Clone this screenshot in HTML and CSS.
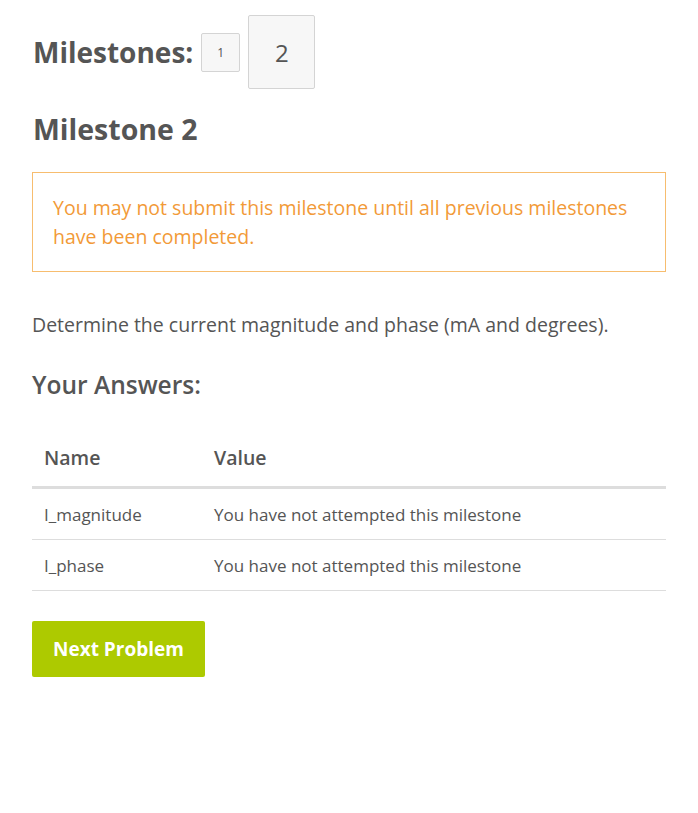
FILE: index.html
```html
<!DOCTYPE html>
<html lang="en">
<head>
  <meta charset="UTF-8" />
  <meta name="viewport" content="width=device-width, initial-scale=1.0"/>
  <title>Milestone 2</title>
  <link rel="stylesheet" href="styles.css">
</head>
<body>
  <div class="content">
    <div class="milestones">
      <h1>Milestones:</h1>
      <button class="step">1</button>
      <button class="step current">2</button>
    </div>

    <h2 class="title">Milestone 2</h2>

    <div class="alert">
      You may not submit this milestone until all previous milestones have been completed.
    </div>

    <p class="question">Determine the current magnitude and phase (mA and degrees).</p>

    <h3 class="answers-title">Your Answers:</h3>

    <table class="answers">
      <thead>
        <tr>
          <th class="name-col">Name</th>
          <th>Value</th>
        </tr>
      </thead>
      <tbody>
        <tr>
          <td>I_magnitude</td>
          <td>You have not attempted this milestone</td>
        </tr>
        <tr>
          <td>I_phase</td>
          <td>You have not attempted this milestone</td>
        </tr>
      </tbody>
    </table>

    <button class="next">Next Problem</button>
  </div>
</body>
</html>
```

FILE: styles.css
```css
body {
  margin: 0;
  font-family: "Open Sans", sans-serif;
  color: #555;
  background-color: #fff;
}

.content {
  padding: 15px 32px 0 32px;
}

.milestones {
  display: flex;
  align-items: center;
  gap: 8px;
}

.milestones h1 {
  margin: 0 0 0 1px;
  font-size: 28px;
  font-weight: 700;
  color: #555;
}

button {
  font-family: "Open Sans", sans-serif;
  cursor: pointer;
}

.step {
  width: 39px;
  height: 39px;
  padding: 0;
  background-color: #f7f7f7;
  border: 1px solid #d4d4d4;
  border-radius: 2px;
  color: #555;
  font-size: 12px;
}

.step.current {
  width: 67px;
  height: 74px;
  font-size: 24px;
}

.title {
  margin: 21px 0 0 1px;
  font-size: 28.5px;
  font-weight: 700;
  line-height: 38px;
  color: #555;
}

.alert {
  margin-top: 24px;
  padding: 20px 20px 20px 20px;
  border: 1px solid #f7bd6f;
  color: #f29a38;
  font-size: 19.5px;
  line-height: 29px;
}

.question {
  margin: 38px 0 0 0;
  font-size: 19.5px;
  line-height: 30px;
  color: #555;
}

.answers-title {
  margin: 28px 0 0 0;
  font-size: 24.5px;
  font-weight: 600;
  line-height: 34px;
  color: #555;
}

.answers {
  width: 100%;
  margin-top: 31px;
  border-collapse: collapse;
}

.answers th {
  text-align: left;
  padding: 11px 12px 14px 12px;
  font-size: 19.5px;
  font-weight: 600;
  line-height: 28px;
  border-bottom: 3px solid #ddd;
}

.answers th.name-col {
  width: 146px;
}

.answers td {
  padding: 12px 12px 11px 12px;
  font-size: 17px;
  line-height: 27px;
  border-bottom: 1px solid #ddd;
}

.next {
  margin-top: 30px;
  padding: 0 21px;
  height: 56px;
  background-color: #adca00;
  border: none;
  border-radius: 2px;
  color: #fff;
  font-size: 19px;
  font-weight: 700;
}
```
